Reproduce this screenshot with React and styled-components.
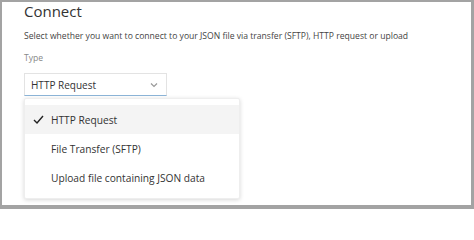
import React from 'react';
import styled, {createGlobalStyle} from 'styled-components';

const GlobalStyle = createGlobalStyle`
	html, body {
		margin: 0;
		padding: 0;
		background: #fff;
	}
	body {
		font-family: "Open Sans", "Noto Sans", sans-serif;
		color: #333;
	}
`;

const Frame = styled.div`
	box-sizing: border-box;
	width: 474px;
	height: 209px;
	border-style: solid;
	border-color: #a3a3a3;
	border-width: 2px 3px 4px 2px;
	background: #fff;
	padding: 0 22px;
	overflow: hidden;
`;

const Heading = styled.h1`
	margin: 0;
	font-size: 15px;
	font-weight: 400;
	line-height: 19px;
	color: #333;
`;

const Description = styled.p`
	margin: 9px 0 0;
	font-size: 8.6px;
	line-height: 12px;
	color: #444;
`;

const Label = styled.div`
	margin-top: 10px;
	font-size: 8.6px;
	line-height: 12px;
	color: #888;
`;

const Field = styled.div`
	position: relative;
	margin-top: 9px;
`;

const SelectBox = styled.div`
	box-sizing: border-box;
	width: 143px;
	height: 23px;
	display: flex;
	align-items: center;
	justify-content: space-between;
	padding: 0 8px 0 6px;
	border: 1px solid #e3e3e3;
	border-bottom: 1.5px solid #8db5d8;
	font-size: 10px;
	color: #333;
`;

const Chevron = styled.svg`
	width: 8px;
	height: 6px;
	stroke: #999;
	fill: none;
	stroke-width: 1.2;
`;

const Menu = styled.ul`
	position: absolute;
	left: 0;
	top: 25px;
	box-sizing: border-box;
	width: 216px;
	margin: 0;
	padding: 6px 0 6px;
	list-style: none;
	background: #fff;
	border: 1px solid #eee;
	border-radius: 2px;
	box-shadow: 0 1px 4px rgba(0, 0, 0, 0.16);
`;

const Item = styled.li`
	display: flex;
	align-items: center;
	height: 29px;
	padding-left: 8px;
	font-size: 10.2px;
	color: #333;
	background: ${p => (p.$active ? '#f4f4f4' : 'transparent')};
`;

const CheckSlot = styled.span`
	width: 18px;
	display: flex;
	align-items: center;
`;

const Check = styled.svg`
	width: 11px;
	height: 9px;
	fill: none;
	stroke: #222;
	stroke-width: 1.4;
`;

const options = ['HTTP Request', 'File Transfer (SFTP)', 'Upload file containing JSON data'];

export default function App() {
	const selected = options[0];
	return (
		<>
			<GlobalStyle />
			<Frame>
				<Heading>Connect</Heading>
				<Description>
					Select whether you want to connect to your JSON file via transfer (SFTP), HTTP request or upload
				</Description>
				<Label>Type</Label>
				<Field>
					<SelectBox>
						{selected}
						<Chevron viewBox="0 0 8 6">
							<path d="M1 1.5 L4 4.5 L7 1.5" />
						</Chevron>
					</SelectBox>
					<Menu>
						{options.map(opt => (
							<Item key={opt} $active={opt === selected}>
								<CheckSlot>
									{opt === selected ? (
										<Check viewBox="0 0 11 9">
											<path d="M1 5 L4 8 L10 1" />
										</Check>
									) : null}
								</CheckSlot>
								{opt}
							</Item>
						))}
					</Menu>
				</Field>
			</Frame>
		</>
	);
}
